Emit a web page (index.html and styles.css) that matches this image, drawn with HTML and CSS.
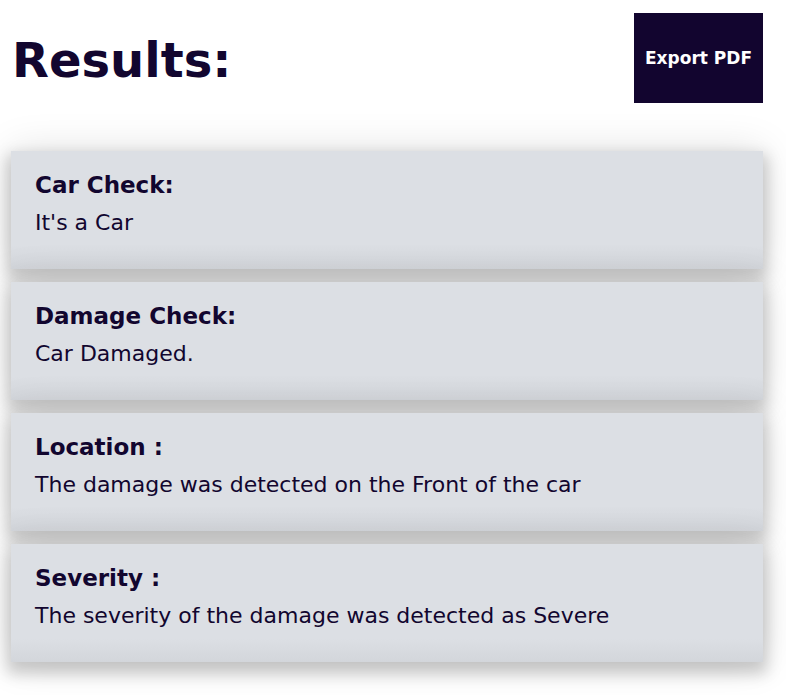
FILE: index.html
```html
<!DOCTYPE html>
<html>
<head>
<meta charset="utf-8">
<link rel="stylesheet" href="styles.css">
</head>
<body>
<div class="page">
  <header class="header">
    <h1 class="title">Results:</h1>
    <button class="export">Export PDF</button>
  </header>
  <section class="cards">
    <div class="card">
      <h2 class="card-title">Car Check:</h2>
      <p class="card-text">It's a Car</p>
    </div>
    <div class="card">
      <h2 class="card-title">Damage Check:</h2>
      <p class="card-text">Car Damaged.</p>
    </div>
    <div class="card">
      <h2 class="card-title">Location :</h2>
      <p class="card-text">The damage was detected on the Front of the car</p>
    </div>
    <div class="card">
      <h2 class="card-title">Severity :</h2>
      <p class="card-text">The severity of the damage was detected as Severe</p>
    </div>
  </section>
</div>
</body>
</html>
```
FILE: styles.css
```css
html, body {
  margin: 0;
  padding: 0;
  background: #ffffff;
}
body {
  font-family: "Comic Sans MS", "DejaVu Sans", sans-serif;
  color: #12062f;
}
.page {
  width: 752px;
  padding: 13px 0 40px 11px;
}
.header {
  display: flex;
  justify-content: space-between;
  align-items: center;
  height: 90px;
}
.title {
  margin: 0;
  font-size: 48px;
  font-weight: bold;
  line-height: 1;
  padding: 4px 0 0 1px;
}
.export {
  width: 129px;
  height: 90px;
  border: none;
  background: #12052f;
  color: #ffffff;
  font-family: inherit;
  font-weight: bold;
  font-size: 17px;
  padding: 0;
}
.cards {
  margin-top: 48px;
  display: flex;
  flex-direction: column;
  gap: 13px;
}
.card {
  height: 118px;
  box-sizing: border-box;
  padding: 20px 24px 0;
  background: linear-gradient(#dcdfe4 0%, #dcdfe4 80%, #d3d6db 100%);
  box-shadow: 0 0 40px rgba(0, 0, 0, 0.13), 0 8px 14px 4px rgba(0, 0, 0, 0.18);
}
.card-title {
  margin: 0;
  font-size: 23px;
  font-weight: bold;
  line-height: 28px;
}
.card-text {
  margin: 10px 0 0;
  font-size: 22px;
  line-height: 28px;
}
```
